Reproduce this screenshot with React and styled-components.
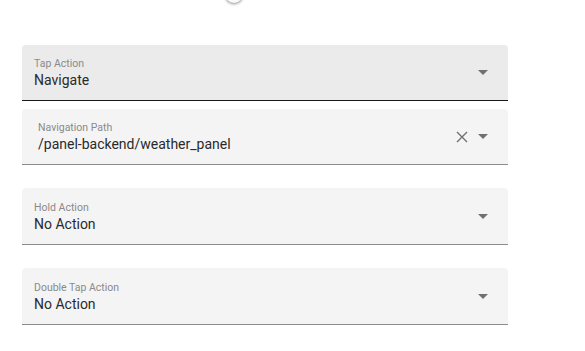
import React from "react";
import styled, { createGlobalStyle } from "styled-components";

const GlobalStyle = createGlobalStyle`
  body {
    margin: 0;
    background: #ffffff;
    font-family: Roboto, "Noto Sans", Arial, sans-serif;
  }
`;

const Page = styled.div`
  width: 486px;
  padding: 0 0 0 22px;
`;

// the switch row above is scrolled almost out of view, only the thumb peeks in
const SwitchRow = styled.div`
  height: 20px;
  margin-top: -16px;
  margin-bottom: 41px;
  display: flex;
  align-items: center;
  padding-left: 203px;
`;

const SwitchThumb = styled.span`
  width: 18px;
  height: 18px;
  border-radius: 50%;
  background: #fafafa;
  box-shadow: 0 1px 3px rgba(0, 0, 0, 0.45);
`;

const Group = styled.div`
  display: flex;
  flex-direction: column;
  gap: ${(p) => p.gap}px;
  margin-bottom: ${(p) => p.after}px;
`;

const Field = styled.div`
  height: ${(p) => p.h}px;
  border-radius: 4px 4px 0 0;
  background: ${(p) => (p.active ? "#ebebeb" : "#f4f4f4")};
  border-bottom: 1px solid ${(p) => (p.active ? "#1a1a1a" : "#8c8c8c")};
  display: flex;
  align-items: center;
  padding: 0 20px 0 ${(p) => p.indent}px;
`;

const Text = styled.div`
  flex: 1;
  display: flex;
  flex-direction: column;
  padding-top: 2px;
`;

const Label = styled.div`
  font-size: 10.5px;
  line-height: 13px;
  color: #8a8a8a;
`;

const Value = styled.div`
  font-size: 14px;
  line-height: 20px;
  color: #2a2a2a;
`;

const Icons = styled.div`
  display: flex;
  align-items: center;
  gap: 10px;
`;

const Arrow = () => (
  <svg width="10" height="5" viewBox="0 0 10 5">
    <path d="M0 0 L10 0 L5 5 Z" fill="#707070" />
  </svg>
);

const Clear = () => (
  <svg width="12" height="12" viewBox="0 0 12 12">
    <path d="M1 1 L11 11 M11 1 L1 11" stroke="#707070" strokeWidth="1.4" />
  </svg>
);

const Select = ({ label, value, active, indent = 12, h = 55, clearable }) => (
  <Field active={active} indent={indent} h={h}>
    <Text>
      <Label>{label}</Label>
      <Value>{value}</Value>
    </Text>
    <Icons>
      {clearable && <Clear />}
      <Arrow />
    </Icons>
  </Field>
);

export default function App() {
  return (
    <Page>
      <GlobalStyle />
      <SwitchRow>
        <SwitchThumb />
      </SwitchRow>
      <Group gap={8} after={23}>
        <Select label="Tap Action" value="Navigate" active />
        <Select
          label="Navigation Path"
          value="/panel-backend/weather_panel"
          indent={16}
          clearable
        />
      </Group>
      <Group gap={23} after={0}>
        <Select label="Hold Action" value="No Action" h={56} />
        <Select label="Double Tap Action" value="No Action" h={56} />
      </Group>
    </Page>
  );
}
